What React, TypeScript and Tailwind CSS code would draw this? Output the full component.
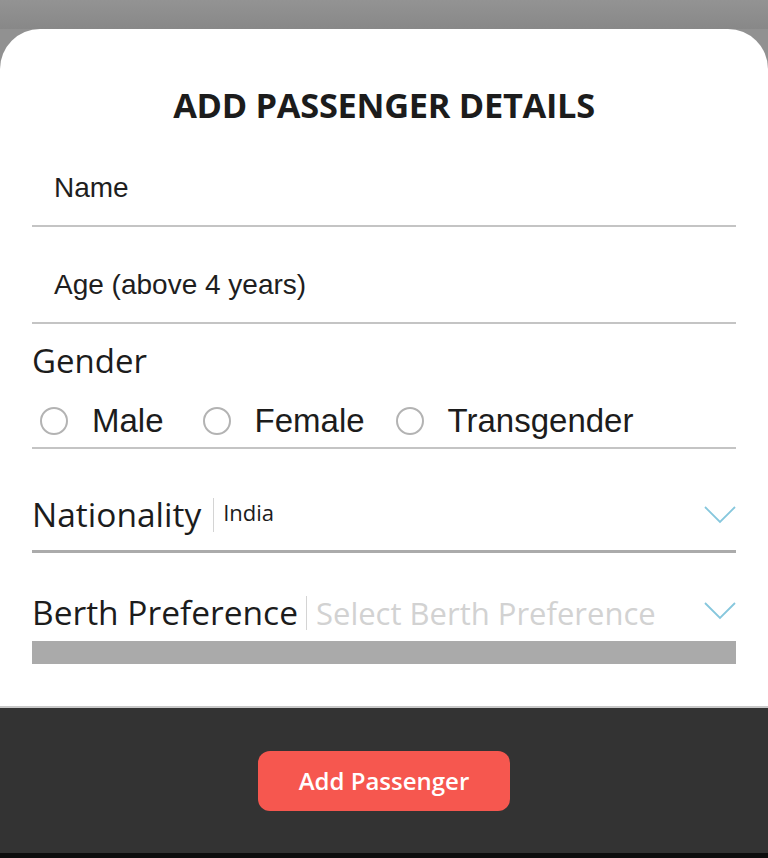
const genders = ['Male', 'Female', 'Transgender'];

function Chevron() {
  return (
    <svg width="32" height="18" viewBox="0 0 32 18" fill="none" className="shrink-0">
      <path d="M1 1 L16 16 L31 1" stroke="#86c7dd" strokeWidth="1.8" />
    </svg>
  );
}

export default function App() {
  return (
    <div className="w-[768px] h-[858px] bg-[#919191] flex flex-col overflow-hidden font-['Open_Sans',sans-serif]">
      <div className="h-[29px] shrink-0 bg-gradient-to-b from-[#939393] to-[#888888]" />
      <div className="flex-1 bg-white rounded-t-[40px] flex flex-col">
        <h1 className="text-center text-[34.4px] font-bold text-[#1c1c1c] tracking-[-0.3px] mt-[56px] leading-[40px]">
          ADD PASSENGER DETAILS
        </h1>

        <div className="px-8 mt-[39px]">
          <div className="border-b-2 border-[#c4c4c4] h-[63px] pl-[22px] pt-[6px] font-['Liberation_Sans',sans-serif] text-[28px] text-[#1e1e1e] leading-[36px]">
            Name
          </div>
          <div className="border-b-2 border-[#c4c4c4] h-[97px] pl-[22px] pt-[40px] font-['Liberation_Sans',sans-serif] text-[28px] text-[#1e1e1e] leading-[36px]">
            Age (above 4 years)
          </div>

          <div className="border-b-2 border-[#c4c4c4] h-[125px] pt-[17px]">
            <div className="text-[33px] text-[#1c1c1c] leading-[40px]">Gender</div>
            <div className="flex items-center mt-[20px] pl-2 font-['Liberation_Sans',sans-serif] text-[33px] text-[#1c1c1c] leading-[40px]">
              {genders.map((g, i) => (
                <label
                  key={g}
                  className={`flex items-center gap-[24px] ${i === 0 ? 'mr-[39px]' : 'mr-[31px]'}`}
                >
                  <span className="w-[28px] h-[28px] rounded-full border-2 border-[#b3b3b3]" />
                  <span>{g}</span>
                </label>
              ))}
            </div>
          </div>

          <div className="border-b-[3px] border-[#ababab] h-[104px] flex items-center pt-[30px]">
            <span className="text-[33.5px] text-[#1c1c1c] leading-[40px] pb-[2px]">Nationality</span>
            <span className="w-px h-[34px] bg-[#d4d4d4] ml-[12px] mr-[9px]" />
            <span className="text-[22px] text-[#1c1c1c] flex-1 leading-[28px] -mt-[6px]">India</span>
            <span><Chevron /></span>
          </div>

          <div className="h-[88px] flex items-center pt-[32px]">
            <span className="text-[33.5px] text-[#1c1c1c] leading-[40px] pb-[2px]">Berth Preference</span>
            <span className="w-px h-[34px] bg-[#d4d4d4] ml-[8px] mr-[9px]" />
            <span className="text-[31px] text-[#d2d2d2] flex-1 leading-[40px]">Select Berth Preference</span>
            <span className="-mt-[4px]"><Chevron /></span>
          </div>
          <div className="h-[23px] bg-[#aaaaaa]" />
        </div>

        <div className="flex-1" />

        <div className="h-[2px] bg-[#c8c8c8]" />
        <div className="h-[145px] bg-[#333333] flex justify-center pt-[43px]">
          <button className="w-[252px] h-[60px] rounded-[12px] bg-[#f6574f] text-white text-[24px] font-semibold leading-[30px]">
            Add Passenger
          </button>
        </div>
        <div className="h-[5px] bg-[#0d0d0d]" />
      </div>
    </div>
  );
}
